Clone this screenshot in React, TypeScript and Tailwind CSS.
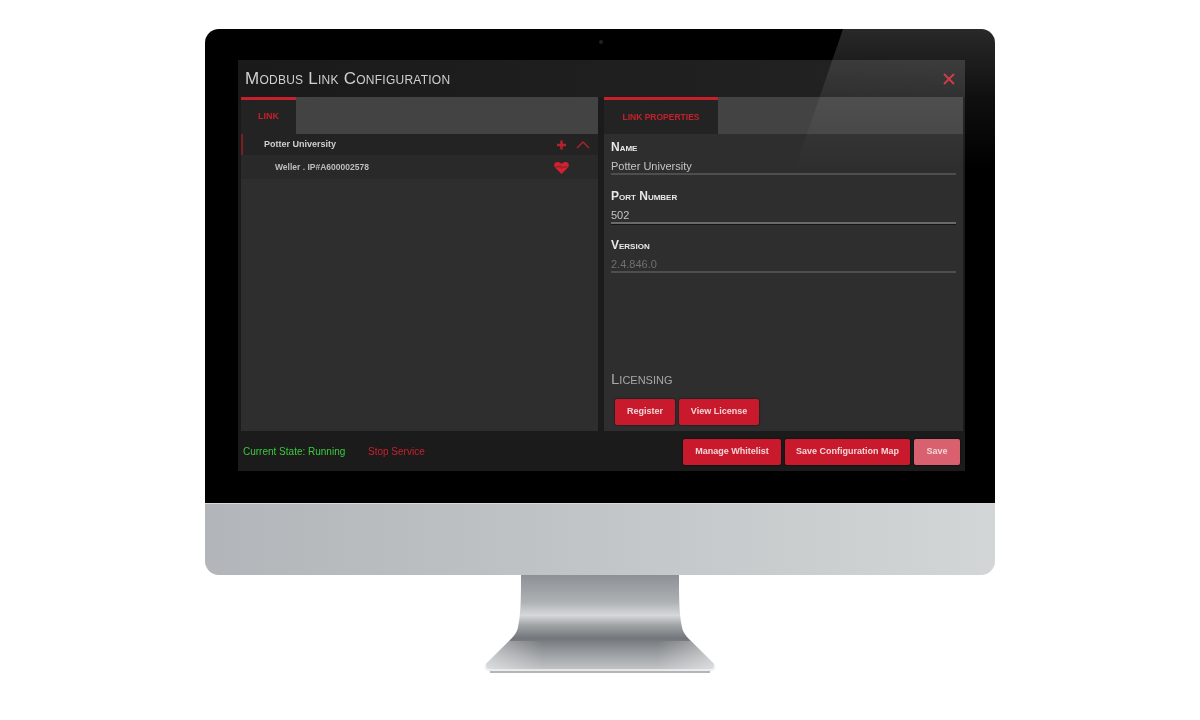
import React from 'react';

const font = "font-['Liberation_Sans',Arial,sans-serif]";

function Field({ label, value, muted, thick, className }: { label: string; value: string; muted?: boolean; thick?: boolean; className?: string }) {
  return (
    <div className={className}>
      <div className="h-[14px] text-[12px] leading-[14px] font-bold text-[#e8e8e8] [font-variant:small-caps]">{label}</div>
      <div className={`mt-[5px] h-[14px] text-[11px] leading-[14px] ${muted ? 'text-[#6f6f6f]' : 'text-[#c4c4c4]'}`}>{value}</div>
      <div className={`w-[345px] ${thick ? 'h-[3px] bg-[#6a6a6a] border-b border-[#161616]' : 'h-[2px] bg-[#4e4e4e]'}`} />
    </div>
  );
}

function RedButton({ children, className }: { children: React.ReactNode; className?: string }) {
  return (
    <button className={`h-[26px] rounded-[2px] text-[9px] font-bold text-[#f4d5d8] shadow-[0_0_2px_rgba(0,0,0,0.8)] ${className ?? 'bg-[#c81a2c]'}`}>
      {children}
    </button>
  );
}

function Tabs({ label, width, text }: { label: string; width: string; text: string }) {
  return (
    <div className="h-[37px] flex bg-[#434343]">
      <div className={`${width} ${text} h-full bg-[#232323] border-t-[3px] border-[#c5202b] flex items-center justify-center font-bold text-[#c5202b] uppercase`}>
        {label}
      </div>
    </div>
  );
}

export default function App() {
  return (
    <div className={`${font} w-[1200px] h-[720px] bg-white overflow-hidden flex flex-col items-center pt-[29px]`}>
      <div className="w-[790px] blur-[0.35px]">
        {/* Screen bezel */}
        <div className="relative h-[474px] overflow-hidden rounded-t-[14px] bg-black pt-[31px] pl-[33px]">
          <div className="absolute left-[394px] top-[11px] w-[4px] h-[4px] rounded-full bg-[#222]" />

          <div className="w-[727px] h-[411px] flex flex-col bg-[#1b1b1b]">
            <div className="h-[37px] flex items-center justify-between pl-[7px] pr-[9px] bg-gradient-to-r from-[#1a1a1a] to-[#232323]">
              <span className="text-[17px] text-[#d0d0d0] tracking-[0.25px] [font-variant:small-caps]">Modbus Link Configuration</span>
              <svg width="14" height="14" viewBox="0 0 14 14" fill="none" stroke="#c62b33" strokeWidth="2">
                <path d="M2 2l10 10M12 2L2 12" />
              </svg>
            </div>

            <div className="h-[334px] flex gap-[6px] pl-[3px]">
              {/* Link tree */}
              <div className="w-[357px] bg-[#2e2e2e]">
                <Tabs label="Link" width="w-[55px]" text="text-[9px]" />
                <div className="h-[21px] flex items-center bg-[#232323] border-l-[2px] border-[#7a1f24] pl-[21px] pr-[6px]">
                  <span className="text-[9px] font-bold text-[#cfcfcf]">Potter University</span>
                  <svg className="ml-auto" width="36" height="12" viewBox="0 0 36 12" fill="none" stroke="#b5222c" strokeWidth="2.5">
                    <path d="M1 6h9M5.500 1.500v9" />
                    <path d="M21 9l6-6 6 6" strokeWidth="1.300" />
                  </svg>
                </div>
                <div className="h-[24px] flex items-center bg-[#292929] pl-[34px] pr-[29px]">
                  <span className="text-[8.5px] font-bold text-[#bdbdbd]">Weller . IP#A600002578</span>
                  <svg className="ml-auto" width="15" height="13" viewBox="0 0 15 13">
                    <path fill="#d6202f" d="M7.500 13L1 6.500C-.8 4.200.4 1 3.600 1c1.600 0 3 .8 3.900 2 .9-1.200 2.300-2 3.900-2 3.200 0 4.400 3.200 2.600 5.500z" />
                    <path fill="none" stroke="#2e2e2e" strokeWidth="0.6" d="M1 6h4l1-1.500 1.500 3 1-1.500h5" />
                  </svg>
                </div>
              </div>

              {/* Properties */}
              <div className="w-[359px] bg-[#2e2e2e] flex flex-col">
                <Tabs label="Link Properties" width="w-[114px]" text="text-[8.5px]" />
                <div className="flex-1 flex flex-col pl-[7px]">
                  <Field className="mt-[6px]" label="Name" value="Potter University" />
                  <Field className="mt-[14px]" label="Port Number" value="502" thick />
                  <Field className="mt-[13px]" label="Version" value="2.4.846.0" muted />
                  <div className="mt-[98px] text-[15px] leading-[16px] text-[#a8a8a8] [font-variant:small-caps]">Licensing</div>
                  <div className="mt-[12px] ml-[4px] flex gap-[4px]">
                    <RedButton className="w-[60px] bg-[#c81a2c]">Register</RedButton>
                    <RedButton className="w-[80px] bg-[#c81a2c]">View License</RedButton>
                  </div>
                </div>
              </div>
            </div>

            {/* Status bar */}
            <div className="h-[40px] flex items-center pl-[5px] pr-[5px]">
              <span className="w-[125px] text-[10px] text-[#3cc83f]">Current State: Running</span>
              <span className="text-[10px] text-[#c8202e]">Stop Service</span>
              <div className="ml-auto flex gap-[4px] translate-y-px">
                <RedButton className="w-[98px] bg-[#c81a2c]">Manage Whitelist</RedButton>
                <RedButton className="w-[125px] bg-[#c81a2c]">Save Configuration Map</RedButton>
                <RedButton className="w-[46px] bg-[#d9606e]">Save</RedButton>
              </div>
            </div>
          </div>

          {/* Glass reflection */}
          <svg className="absolute inset-0 pointer-events-none" width="790" height="474" viewBox="0 0 790 474">
            <defs>
              <linearGradient id="glare" x1="0" y1="0" x2="0" y2="1">
                <stop offset="0" stopColor="#fff" stopOpacity="0.16" />
                <stop offset="0.5" stopColor="#fff" stopOpacity="0.06" />
                <stop offset="1" stopColor="#fff" stopOpacity="0" />
              </linearGradient>
            </defs>
            <path d="M638 0L590 140H790V0z" fill="url(#glare)" />
          </svg>
        </div>

        {/* Chin */}
        <div className="h-[72px] rounded-b-[14px] border-t border-[#d8dadc] bg-gradient-to-r from-[#b2b5b9] to-[#d3d6d6]" />
      </div>

      {/* Stand */}
      <svg className="blur-[0.35px]" width="232" height="104" viewBox="0 0 232 104">
        <defs>
          <linearGradient id="neck" x1="0" y1="0" x2="0" y2="1">
            <stop offset="0" stopColor="#8d9094" />
            <stop offset="0.28" stopColor="#aeb1b4" />
            <stop offset="0.42" stopColor="#d6d8d9" />
            <stop offset="0.52" stopColor="#a2a5a8" />
            <stop offset="0.66" stopColor="#72757a" />
            <stop offset="0.85" stopColor="#a3a6a9" />
            <stop offset="1" stopColor="#c5c7c9" />
          </linearGradient>
          <linearGradient id="edges" x1="0" y1="0" x2="1" y2="0">
            <stop offset="0" stopColor="#fff" stopOpacity="0.45" />
            <stop offset="0.25" stopColor="#fff" stopOpacity="0" />
            <stop offset="0.75" stopColor="#fff" stopOpacity="0" />
            <stop offset="1" stopColor="#fff" stopOpacity="0.45" />
          </linearGradient>
        </defs>
        <path d="M37 0H195C195 22 195 38 198 52C199 58 203 62 207 66L230 89C233 93 230 96 226 96H6C2 96 -1 93 2 89L25 66C29 62 33 58 34 52C37 38 37 22 37 0z" fill="url(#neck)" />
        <path d="M2 89L25 66H207L230 89C233 93 230 96 226 96H6C2 96 -1 93 2 89z" fill="url(#edges)" />
        <path d="M2 89.500C0 93 3 95 7 95H225C229 95 232 93 230 89.500" fill="none" stroke="#f2f3f3" strokeWidth="1.500" />
        <path d="M6 97H226" stroke="#9a9c9f" strokeWidth="1.500" />
      </svg>
    </div>
  );
}
